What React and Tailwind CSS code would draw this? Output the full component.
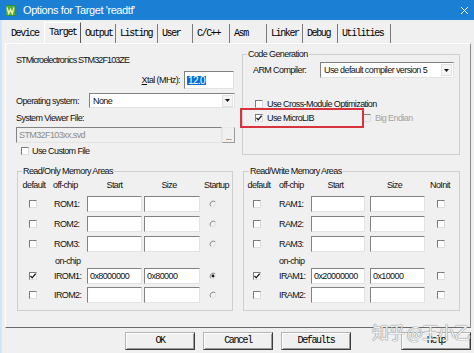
import React from "react";

const F = "font-['Liberation_Sans',Arial,sans-serif]";
const M = "font-['Liberation_Mono','Courier_New',monospace]";

function Box({ checked = false, disabled = false }) {
  return (
    <span
      className={`flex items-center justify-center w-[8px] h-[8px] shrink-0 border border-t-[#7c7c7c] border-l-[#7c7c7c] border-r-[#dedede] border-b-[#dedede] ${
        disabled ? "bg-[#f0f0f0]" : "bg-white"
      }`}
    >
      {checked && (
        <svg width="6" height="6" viewBox="0 0 6 6">
          <path d="M0.5 2.8 L2.2 4.8 L5.6 0.6" fill="none" stroke="#111" strokeWidth="1.3" />
        </svg>
      )}
    </span>
  );
}

function Radio({ on = false }) {
  return (
    <svg width="8" height="8" viewBox="0 0 8 8" className="shrink-0">
      <path d="M6.3 1.7 A3.3 3.3 0 0 0 1.7 6.3" fill="none" stroke="#8a8a8a" strokeWidth="1" />
      <path d="M1.7 6.3 A3.3 3.3 0 0 0 6.3 1.7" fill="none" stroke="#e2e2e2" strokeWidth="1" />
      {on && <circle cx="4" cy="4" r="1.4" fill="#111" />}
    </svg>
  );
}

function Edit({ className = "", children = null, disabled = false }) {
  return (
    <div
      className={`h-[16px] shrink-0 border border-t-[#828282] border-l-[#828282] border-r-[#e3e3e3] border-b-[#e3e3e3] flex items-center pl-[2px] leading-[12px] whitespace-nowrap overflow-hidden ${
        disabled ? "bg-[#f0f0f0] text-[#8d8d8d]" : "bg-white"
      } ${className}`}
    >
      {children}
    </div>
  );
}

function Combo({ className = "", value }) {
  return (
    <div
      className={`shrink-0 bg-white border border-t-[#828282] border-l-[#828282] border-r-[#e3e3e3] border-b-[#e3e3e3] flex items-center ${className}`}
    >
      <span className="flex-1 pl-[3px] whitespace-nowrap overflow-hidden">{value}</span>
      <span className="w-[11px] h-[12px] mr-[1px] flex items-center justify-center bg-[#f4f4f4] border border-[#e2e2e2]">
        <svg width="5" height="3" viewBox="0 0 5 3">
          <path d="M0 0 H5 L2.5 3 Z" fill="#111" />
        </svg>
      </span>
    </div>
  );
}

function Btn({ className = "", children }) {
  return (
    <div
      className={`h-[18px] w-[70px] flex items-center justify-center bg-[#f0f0f0] border border-t-[#b4b4b4] border-l-[#b4b4b4] border-r-[#3c3c3c] border-b-[#3c3c3c] shadow-[inset_1px_1px_0_#ffffff,inset_-1px_-1px_0_#9a9a9a] ${className}`}
    >
      {children}
    </div>
  );
}

function Tab({ className = "", sel = false, children }) {
  return (
    <div
      className={`flex items-center pl-[4px] shrink-0 ${
        sel ? "h-[21px] border-l border-t border-r border-l-white border-t-white border-r-[#5a5a5a]" : "h-[19px]"
      } ${className}`}
    >
      {children}
    </div>
  );
}

function LeftRow({ label, checked = false, start = "", size = "", on = false, className = "" }) {
  return (
    <div className={`flex items-center h-[16px] ${className}`}>
      <span className="w-[32px] pl-[11px] flex">
        <Box checked={checked} />
      </span>
      <span className="w-[36px] pl-[4px]">{label}</span>
      <span className="w-[57px] pl-[1px]">
        <Edit className="w-[55px]">{start}</Edit>
      </span>
      <span className="w-[58px] pl-[1px]">
        <Edit className="w-[56px]">{size}</Edit>
      </span>
      <span className="w-[31px] pl-[8px] flex">
        <Radio on={on} />
      </span>
    </div>
  );
}

function RightRow({ label, checked = false, start = "", size = "", className = "" }) {
  return (
    <div className={`flex items-center h-[16px] ${className}`}>
      <span className="w-[30px] pl-[9px] flex">
        <Box checked={checked} />
      </span>
      <span className="w-[36px] pl-[5px]">{label}</span>
      <span className="w-[57px] pl-[1px]">
        <Edit className="w-[54px]">{start}</Edit>
      </span>
      <span className="w-[60px] pl-[3px]">
        <Edit className="w-[55px]">{size}</Edit>
      </span>
      <span className="w-[26px] pl-[10px] flex">
        <Box />
      </span>
    </div>
  );
}

export default function App() {
  return (
    <div
      className={`relative w-[474px] h-[353px] overflow-hidden bg-[#f0f0f0] text-[#111] text-[9px] leading-[12px] tracking-[-0.6px] ${F} flex flex-col`}
    >
      {/* Title bar */}
      <div className="h-[20px] shrink-0 bg-[#1b7fd4] flex items-center">
        <svg className="ml-[5px]" width="11" height="11" viewBox="0 0 11 11">
          <rect x="0" y="0" width="11" height="11" fill="#2f8f3a" />
          <rect x="1" y="1" width="9" height="9" fill="#4fae4a" />
          <path d="M2 2.5 L3.8 8.5 L5.5 4.5 L7.2 8.5 L9 2.5" fill="none" stroke="#f6f1a8" strokeWidth="1.4" />
        </svg>
        <span className="ml-[7px] text-white text-[11px] leading-[14px] tracking-[-0.4px] whitespace-nowrap">
          Options for Target 'readtf'
        </span>
        <svg className="ml-auto mr-[6px]" width="7" height="7" viewBox="0 0 7 7">
          <path d="M0 0 L7 7 M7 0 L0 7" stroke="#fff" strokeWidth="1" />
        </svg>
      </div>

      <div className="flex-1 flex flex-col border-l-2 border-[#d3e5f6]">
        {/* Tabs */}
        <div className={`flex items-end h-[21px] mt-[2px] pl-[5px] ${M} text-[10px] tracking-[-1.4px] text-black`}>
          <Tab className="w-[37px]">Device</Tab>
          <Tab sel className="w-[37px]">Target</Tab>
          <Tab className="w-[35px] border-r border-[#7a7a7a]">Output</Tab>
          <Tab className="w-[42px] border-r border-[#7a7a7a]">Listing</Tab>
          <Tab className="w-[35px] border-r border-[#7a7a7a]">User</Tab>
          <Tab className="w-[37px] border-r border-[#7a7a7a]">C/C++</Tab>
          <Tab className="w-[37px] border-r border-[#7a7a7a]">Asm</Tab>
          <Tab className="w-[36px] border-r border-[#7a7a7a]">Linker</Tab>
          <Tab className="w-[35px] border-r border-[#7a7a7a]">Debug</Tab>
          <Tab className="w-[53px] border-r border-[#7a7a7a]">Utilities</Tab>
        </div>

        {/* Panel */}
        <div className="ml-[3px] w-[466px] h-[285px] shrink-0 border border-t-white border-l-white border-r-[#8a8a8a] border-b-[#6a6a6a] flex pl-[10px]">
          {/* Left column */}
          <div className="w-[219px] flex flex-col">
            <div className="mt-[10px] h-[12px] whitespace-nowrap tracking-[-0.9px]">STMicroelectronics STM32F103ZE</div>
            <div className="mt-[5px] flex items-center justify-end pr-[1px] gap-[4px]">
              <span>
                <span className="underline">X</span>tal (MHz):
              </span>
              <div className="w-[50px] h-[18px] bg-white border border-t-[#828282] border-l-[#828282] border-r-[#e3e3e3] border-b-[#e3e3e3] flex items-center pl-[2px]">
                <span className="bg-[#0a6fd1] text-white text-[10px] leading-[9px] px-[1px]">12.0</span>
              </div>
            </div>
            <div className="mt-[4px] flex items-center">
              <span className="w-[73px] whitespace-nowrap">Operating system:</span>
              <Combo className="w-[146px] h-[15px]" value="None" />
            </div>
            <div className="mt-[4px] h-[12px]">System Viewer File:</div>
            <div className="mt-[3px] flex">
              <Edit className="w-[206px]" disabled>
                STM32F103xx.svd
              </Edit>
              <div className="w-[13px] h-[16px] flex items-end justify-center pb-[2px] bg-[#f0f0f0] border border-t-[#e8e8e8] border-l-[#e8e8e8] border-r-[#9a9a9a] border-b-[#9a9a9a] text-[#555] leading-[6px]">
                ...
              </div>
            </div>
            <div className="mt-[3px] flex items-center h-[10px] pl-[5px] gap-[3px]">
              <Box />
              <span>Use Custom File</span>
            </div>

            <fieldset className="mt-[9px] ml-[1px] w-[216px] border border-[#cfcfcf] pb-[7px]">
              <legend className="ml-[4px] px-[1px] leading-[12px]">Read/Only Memory Areas</legend>
              <div className="flex items-center h-[12px] mt-[2px]">
                <span className="w-[32px] text-center">default</span>
                <span className="w-[36px] pl-[3px]">off-chip</span>
                <span className="w-[57px] text-center">Start</span>
                <span className="w-[58px] text-center pr-[6px]">Size</span>
                <span className="w-[31px] text-center">Startup</span>
              </div>
              <LeftRow className="mt-[5px]" label="ROM1:" />
              <LeftRow className="mt-[4px]" label="ROM2:" />
              <LeftRow className="mt-[4px]" label="ROM3:" />
              <div className="mt-[3px] h-[12px] pl-[37px]">on-chip</div>
              <LeftRow className="mt-[1px]" label="IROM1:" checked start="0x8000000" size="0x80000" on />
              <LeftRow className="mt-[3px]" label="IROM2:" />
            </fieldset>
          </div>

          {/* Right column */}
          <div className="ml-[7px] w-[218px] flex flex-col">
            <fieldset className="mt-[4px] h-[107px] border border-[#cfcfcf]">
              <legend className="ml-[4px] px-[1px] leading-[12px]">Code Generation</legend>
              <div className="mt-[2px] flex items-center pl-[10px]">
                <span className="w-[67px]">ARM Compiler:</span>
                <Combo className="w-[134px] h-[16px]" value="Use default compiler version 5" />
              </div>
              <div className="mt-[21px] flex items-center h-[10px] pl-[12px] gap-[4px]">
                <Box />
                <span>Use Cross-Module Optimization</span>
              </div>
              <div className="mt-[4px] flex items-center h-[10px] pl-[12px]">
                <span className="w-[108px] flex items-center gap-[4px]">
                  <Box checked />
                  <span>Use MicroLIB</span>
                </span>
                <Box disabled />
                <span className="ml-[4px] text-[#a3a3a3]">Big Endian</span>
              </div>
            </fieldset>

            <fieldset className="mt-[10px] ml-[1px] w-[217px] border border-[#cfcfcf] pb-[7px]">
              <legend className="ml-[5px] px-[1px] leading-[12px]">Read/Write Memory Areas</legend>
              <div className="flex items-center h-[12px] mt-[2px]">
                <span className="w-[30px] text-center">default</span>
                <span className="w-[36px] pl-[5px]">off-chip</span>
                <span className="w-[57px] text-center pr-[6px]">Start</span>
                <span className="w-[60px] text-center pr-[5px]">Size</span>
                <span className="w-[26px] text-center">NoInit</span>
              </div>
              <RightRow className="mt-[5px]" label="RAM1:" />
              <RightRow className="mt-[4px]" label="RAM2:" />
              <RightRow className="mt-[4px]" label="RAM3:" />
              <div className="mt-[3px] h-[12px] pl-[35px]">on-chip</div>
              <RightRow className="mt-[1px]" label="IRAM1:" checked start="0x20000000" size="0x10000" />
              <RightRow className="mt-[3px]" label="IRAM2:" />
            </fieldset>
          </div>
        </div>

        {/* Buttons */}
        <div className={`mt-[4px] flex ${M} text-[10px] tracking-[-1.4px] text-black`}>
          <Btn className="ml-[123px]">OK</Btn>
          <Btn className="ml-[8px]">Cancel</Btn>
          <Btn className="ml-[8px]">Defaults</Btn>
          <Btn className="ml-[50px] w-[69px]">Help</Btn>
        </div>
      </div>

      {/* Annotation */}
      <div className="absolute left-[240px] top-[108px] w-[124px] h-[20px] border-2 border-[#d7343d]" />

      {/* Watermark */}
      <div className="absolute left-[372px] top-[321px] text-[17px] leading-[22px] tracking-[-1px] text-white/90 font-['Noto_Sans_CJK_SC',sans-serif] [text-shadow:0_0_1px_#7a7a7a,0_0_1px_#7a7a7a] whitespace-nowrap">
        知乎 @王小乙
      </div>
    </div>
  );
}
